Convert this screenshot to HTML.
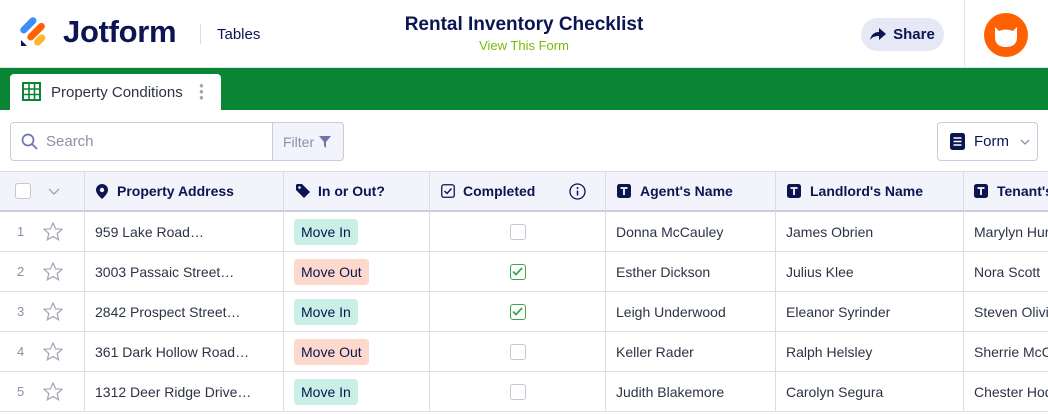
<!DOCTYPE html>
<html><head><meta charset="utf-8"><style>
*{box-sizing:border-box;margin:0;padding:0}
body{width:1048px;height:414px;overflow:hidden;background:#fff;font-family:"Liberation Sans",sans-serif;color:#0a1551;position:relative}
svg{flex-shrink:0}
.abs{position:absolute}
.hdr{top:0;left:0;width:1048px;height:68px;background:#fff;border-bottom:1px solid #e3e5ee}
.green{top:68px;left:0;width:1048px;height:42px;background:#0a8533}
.tab{top:74px;left:10px;width:211px;height:37px;background:#fff;border-radius:4px 4px 0 0}
.cell{position:absolute;height:40px;border-right:1px solid #dadde8;border-bottom:1px solid #dadde8;font-size:14px;display:flex;align-items:center;color:#2c3345}
.th{background:#f3f4fb;font-weight:bold;color:#0a1551;border-bottom:2px solid #c8ccdc}
.tag{padding:5px 7px;border-radius:4px;font-size:14px;color:#0a1551}
.in{background:#c8f0e6}.out{background:#fdd8cc}
.cb{width:16px;height:16px;border:1.5px solid #c3c7d6;border-radius:3px;background:#fff}
.cbk{border-color:#3ca64a;display:flex;align-items:center;justify-content:center}
</style></head><body>
<div class="abs hdr"></div>
<svg class="abs" style="left:20px;top:17px" width="30" height="30" viewBox="0 0 30 30">
<rect x="-2" y="5" width="20" height="7" rx="3.5" fill="#3b8ff5" transform="rotate(-45 8 8)"/>
<rect x="5" y="12" width="22" height="7" rx="3.5" fill="#ff6100" transform="rotate(-45 15 15)"/>
<rect x="13" y="20" width="13" height="7" rx="3.5" fill="#ffb629" transform="rotate(-45 19 23)"/>
<path d="M1 38 L1 44 L7 44Z" fill="#0a1551" transform="translate(0,-15)"/>
</svg>
<div class="abs" style="left:63px;top:14px;font-size:31px;font-weight:bold;color:#0a1551;letter-spacing:-0.3px">Jotform</div>
<div class="abs" style="left:200px;top:24px;width:1px;height:20px;background:#dadde8"></div>
<div class="abs" style="left:217px;top:26px;font-size:15px;color:#0a1551">Tables</div>
<div class="abs" style="left:0;top:14px;width:1048px;text-align:center;font-size:19px;font-weight:bold;color:#0a1551">Rental Inventory Checklist</div>
<div class="abs" style="left:0;top:38px;width:1048px;text-align:center;font-size:13px;color:#78bb07">View This Form</div>
<div class="abs" style="left:861px;top:18px;width:83px;height:33px;border-radius:17px;background:#e6e8f5;font-size:15px;font-weight:bold;display:flex;align-items:center;justify-content:center;gap:7px">
<svg width="16" height="13" viewBox="0 0 16 13"><path d="M9 0L16 6L9 12V8C5 8 2 9 0 12C1 7 4 4 9 4Z" fill="#0a1551"/></svg>Share</div>
<div class="abs" style="left:964px;top:0;width:1px;height:68px;background:#e3e5ee"></div>
<svg class="abs" style="left:984px;top:13px" width="44" height="44" viewBox="0 0 44 44"><circle cx="22" cy="22" r="22" fill="#ff6100"/><path d="M11 14L15 18Q22 15 29 18L33 14L33 24Q33 34 22 34Q11 34 11 24Z" fill="#fff"/></svg>
<div class="abs green"></div>
<div class="abs tab"></div>
<svg class="abs" style="left:22px;top:82px" width="19" height="19" viewBox="0 0 19 19"><rect x="1" y="1" width="17" height="17" fill="none" stroke="#0a8533" stroke-width="2"/><path d="M1 7H18M1 12.5H18M7 1V18M12.5 1V18" stroke="#0a8533" stroke-width="1.6"/></svg>
<div class="abs" style="left:51px;top:84px;font-size:15px;color:#2c3345">Property Conditions</div>
<div class="abs" style="left:199px;top:83px;width:4px;color:#a0a4b4;font-size:8px;line-height:6px">●<br>●<br>●</div>
<div class="abs" style="left:10px;top:122px;width:334px;height:39px;border:1px solid #c8ccdc;border-radius:4px"></div>
<svg class="abs" style="left:21px;top:133px" width="17" height="17" viewBox="0 0 17 17"><circle cx="7" cy="7" r="5.5" fill="none" stroke="#6f76a7" stroke-width="1.7"/><path d="M11 11L16 16" stroke="#6f76a7" stroke-width="1.7"/></svg>
<div class="abs" style="left:46px;top:133px;font-size:15px;color:#8a8fab">Search</div>
<div class="abs" style="left:272px;top:122px;width:72px;height:39px;border:1px solid #c8ccdc;border-radius:0 4px 4px 0;background:#f3f4fb;font-size:14px;color:#8a8fab;display:flex;align-items:center;padding-left:10px;gap:5px">Filter <svg width="12" height="12" viewBox="0 0 12 12"><path d="M0 0H12L7 6V12L5 10V6Z" fill="#6f76a7"/></svg></div>
<div class="abs" style="left:937px;top:122px;width:101px;height:39px;border:1px solid #c8ccdc;border-radius:4px;display:flex;align-items:center;padding-left:12px;font-size:15px;gap:9px">
<svg width="15" height="17" viewBox="0 0 15 17"><rect width="15" height="17" rx="2.5" fill="#0a1551"/><path d="M3.5 5H11.5M3.5 8.5H11.5M3.5 12H11.5" stroke="#fff" stroke-width="1.6"/></svg>Form <svg style="margin-left:2px" width="10" height="6" viewBox="0 0 10 6"><path d="M1 1L5 5L9 1" fill="none" stroke="#8a8fab" stroke-width="1.3"/></svg></div>
<div class="abs" style="left:0;top:171px;width:1048px;height:1px;background:#dadde8"></div>

<div class="cell th" style="left:0;top:172px;width:85px;padding-left:15px;gap:17px"><div class="cb"></div><svg width="12" height="7" viewBox="0 0 12 7"><path d="M1 1L6 6L11 1" fill="none" stroke="#a0a4b4" stroke-width="1.4"/></svg></div>
<div class="cell th" style="left:85px;top:172px;width:199px;padding-left:11px;gap:9px"><svg width="12" height="15" viewBox="0 0 12 15"><path d="M6 0A6 6 0 0 1 12 6C12 10 6 15 6 15C6 15 0 10 0 6A6 6 0 0 1 6 0Z" fill="#0a1551"/><circle cx="6" cy="6" r="2.2" fill="#f3f4fb"/></svg>Property Address</div>
<div class="cell th" style="left:284px;top:172px;width:146px;padding-left:12px;gap:8px"><svg width="14" height="14" viewBox="0 0 14 14"><path d="M0 1V6L8 14L14 8L6 0H1Z" fill="#0a1551"/><circle cx="3.5" cy="3.5" r="1.3" fill="#f3f4fb"/></svg>In or Out?</div>
<div class="cell th" style="left:430px;top:172px;width:176px;padding-left:11px;gap:8px"><svg width="14" height="14" viewBox="0 0 14 14"><rect x=".75" y=".75" width="12.5" height="12.5" rx="2" fill="none" stroke="#0a1551" stroke-width="1.3"/><path d="M3.5 7L6 9.5L10.5 4.5" fill="none" stroke="#0a1551" stroke-width="1.4"/></svg>Completed<svg style="margin-left:auto;margin-right:19px" width="17" height="17" viewBox="0 0 17 17"><circle cx="8.5" cy="8.5" r="7.5" fill="none" stroke="#0a1551" stroke-width="1.3"/><path d="M8.5 7.5V12.5" stroke="#0a1551" stroke-width="1.5"/><circle cx="8.5" cy="5" r="1" fill="#0a1551"/></svg></div>
<div class="cell th" style="left:606px;top:172px;width:170px;padding-left:11px;gap:9px"><svg width="14" height="14" viewBox="0 0 14 14"><rect width="14" height="14" rx="2.5" fill="#0a1551"/><path d="M3.5 4H10.5M7 4V11" stroke="#fff" stroke-width="1.8"/></svg>Agent's Name</div>
<div class="cell th" style="left:776px;top:172px;width:188px;padding-left:11px;gap:9px"><svg width="14" height="14" viewBox="0 0 14 14"><rect width="14" height="14" rx="2.5" fill="#0a1551"/><path d="M3.5 4H10.5M7 4V11" stroke="#fff" stroke-width="1.8"/></svg>Landlord's Name</div>
<div class="cell th" style="left:964px;top:172px;width:120px;padding-left:10px;gap:9px;white-space:nowrap"><svg width="14" height="14" viewBox="0 0 14 14"><rect width="14" height="14" rx="2.5" fill="#0a1551"/><path d="M3.5 4H10.5M7 4V11" stroke="#fff" stroke-width="1.8"/></svg>Tenant's Name</div>

<div id="rows"></div>
<script>
var d=[["959 Lake Road…","in",0,"Donna McCauley","James Obrien","Marylyn Hurst"],
["3003 Passaic Street…","out",1,"Esther Dickson","Julius Klee","Nora Scott"],
["2842 Prospect Street…","in",1,"Leigh Underwood","Eleanor Syrinder","Steven Olivier"],
["361 Dark Hollow Road…","out",0,"Keller Rader","Ralph Helsley","Sherrie McCoy"],
["1312 Deer Ridge Drive…","in",0,"Judith Blakemore","Carolyn Segura","Chester Hodges"]];
var h="";
d.forEach(function(r,i){var t=212+i*40;
h+='<div class="cell" style="left:0;top:'+t+'px;width:85px;padding-left:17px;gap:19px;color:#8a8fab;font-size:13px">'+(i+1)+'<svg width="20" height="19" viewBox="0 0 20 19"><path d="M10 1L12.6 6.8L19 7.3L14.2 11.5L15.6 17.8L10 14.5L4.4 17.8L5.8 11.5L1 7.3L7.4 6.8Z" fill="none" stroke="#a0a4b4" stroke-width="1.2"/></svg></div>';
h+='<div class="cell" style="left:85px;top:'+t+'px;width:199px;padding-left:10px">'+r[0]+'</div>';
h+='<div class="cell" style="left:284px;top:'+t+'px;width:146px;padding-left:10px"><span class="tag '+r[1]+'">'+(r[1]=="in"?"Move In":"Move Out")+'</span></div>';
h+='<div class="cell" style="left:430px;top:'+t+'px;width:176px;justify-content:center">'+(r[2]?'<div class="cb cbk"><svg width="11" height="9" viewBox="0 0 11 9"><path d="M1 4.5L4 7.5L10 1" fill="none" stroke="#3ca64a" stroke-width="1.8"/></svg></div>':'<div class="cb"></div>')+'</div>';
h+='<div class="cell" style="left:606px;top:'+t+'px;width:170px;padding-left:10px">'+r[3]+'</div>';
h+='<div class="cell" style="left:776px;top:'+t+'px;width:188px;padding-left:10px">'+r[4]+'</div>';
h+='<div class="cell" style="left:964px;top:'+t+'px;width:120px;padding-left:10px;white-space:nowrap">'+r[5]+'</div>';});
document.getElementById("rows").innerHTML=h;
</script>
</body></html>
